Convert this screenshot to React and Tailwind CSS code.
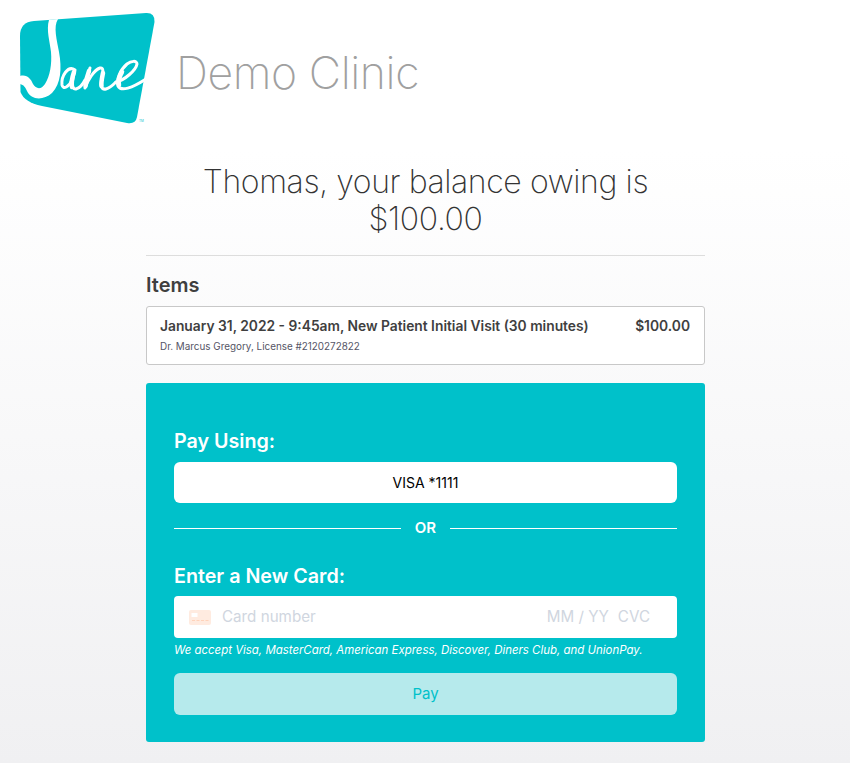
import React from 'react';

const JaneLogo = () => (
  <svg width="165" height="130" viewBox="0 0 165 130" className="shrink-0">
    <path
      d="M34 21 L146 13 Q155 12.5 154.5 22 L137 117 Q135.500 124.500 127 123 L42 106 Q24 102 20.500 92 L20 36 Q20 22 34 21 Z"
      fill="#00c1ca"
    />
    <path
      d="M49 20 L58 19 C53 27 57 40 59 52 C62 68 61 84 52 93 C43 101 31 100 27 91 C25 87 24 85 20 84 L20 76 C27 74 31 79 33 84 C36 89 41 90 45 84 C50 76 52 64 51 52 C50 42 46 30 49 20 Z"
      fill="#fff"
    />
    <g fill="none" stroke="#fff" strokeWidth="3" strokeLinecap="round" strokeLinejoin="round">
      <path d="M75 70 C68 65 61 76 62 85 C63 90 69 87 72 80 L75 70 C72 80 71 90 76 89 C80 88 83 84 85 80" />
      <path d="M90 68 C88 74 86 82 85 88 C88 80 94 70 100 68 C104 67 103 73 102 78 C100 85 101 90 106 89 C110 88 113 85 116 82" />
      <path d="M116 82 C125 80 136 70 137 64 C137 60 131 61 127 64 C120 70 116 80 118 86 C121 92 132 88 146 79" />
    </g>
    {/* heavier downstrokes of the script */}
    <g fill="none" stroke="#fff" strokeWidth="4.500" strokeLinecap="round">
      <path d="M74 72 C72 78 71 84 72 87" />
      <path d="M89 71 C87 76 86 81 85.500 86" />
      <path d="M103 73 C102 78 101 82 101.500 86" />
      <path d="M122 72 C119 77 118 81 119 85" />
    </g>
    <text x="139" y="122" fontSize="3" fill="#00c1ca" fontFamily="Inter, sans-serif">TM</text>
  </svg>
);

const App = () => {
  return (
    <div className="min-h-[763px] bg-[linear-gradient(#ffffff_150px,#f0f0f2_763px)] font-['Inter',sans-serif] text-[#3f3f3f]">
      <div className="flex items-start">
        <JaneLogo />
        <div className="ml-[11px] mt-[41px] text-[44.500px] leading-[64px] font-extralight tracking-[-0.4px] text-[#a0a0a0]">Demo Clinic</div>
      </div>

      <div className="w-[559px] ml-[146px] pb-[21px]">
        <h1 className="mt-[33px] text-center text-[32px] leading-[37px] font-extralight tracking-[-0.4px] text-[#333333]">
          Thomas, your balance owing is
          <br />
          $100.00
        </h1>
        <hr className="mt-[18px] border-t border-[#dddddd]" />

        <h2 className="mt-[14px] text-[20px] leading-[30px] font-semibold">Items</h2>
        <div className="mt-[6px] h-[59px] flex justify-between rounded-[3px] border border-[#c8c8c8] bg-white pl-[13px] pr-[14px] pt-[10px]">
          <div>
            <div className="text-[13.800px] leading-[18px] font-semibold">January 31, 2022 - 9:45am, New Patient Initial Visit (30 minutes)</div>
            <div className="mt-[4px] text-[9.900px] leading-[14px] text-[#555566]">Dr. Marcus Gregory, License #2120272822</div>
          </div>
          <div className="text-[13.800px] leading-[18px] font-semibold">$100.00</div>
        </div>

        <div className="mt-[18px] h-[359px] rounded-[3px] bg-[#00c1ca] px-[28px] pt-[44px] text-white">
          <h3 className="text-[19.700px] leading-[28px] font-semibold">Pay Using:</h3>
          <button className="mt-[7px] block h-[41px] w-full rounded-[6px] bg-white text-center text-[14px] text-black">VISA *1111</button>

          <div className="mt-[15px] flex items-center gap-[14px]">
            <div className="h-px flex-1 bg-white" />
            <span className="text-[15px] leading-[20px] font-semibold">OR</span>
            <div className="h-px flex-1 bg-white" />
          </div>

          <h3 className="mt-[24px] text-[19.700px] leading-[28px] font-semibold">Enter a New Card:</h3>
          <div className="mt-[6px] flex h-[42px] items-center rounded-[4px] bg-white pl-[15px] pr-[27px] text-[15.200px] text-[#d0d6e0]">
            <svg width="22" height="15" viewBox="0 0 22 15" className="shrink-0">
              <rect width="22" height="15" rx="2" fill="#ffebe0" />
              <rect x="2.500" y="3" width="6" height="4" fill="#ffffff" />
              <path d="M3 10.500h3M7.500 10.500h3M12 10.500h3M16.500 10.500h3" stroke="#ffd3bb" strokeWidth="1" />
            </svg>
            <span className="ml-[11px]">Card number</span>
            <span className="ml-auto">MM / YY</span>
            <span className="ml-[9px]">CVC</span>
          </div>
          <p className="mt-[4px] text-[11.450px] leading-[16px] italic">We accept Visa, MasterCard, American Express, Discover, Diners Club, and UnionPay.</p>

          <button className="mt-[15px] block h-[42px] w-full rounded-[6px] bg-[#b6eaec] text-center text-[15px] text-[#00c1ca]">Pay</button>
        </div>
      </div>
    </div>
  );
};

export default App;
